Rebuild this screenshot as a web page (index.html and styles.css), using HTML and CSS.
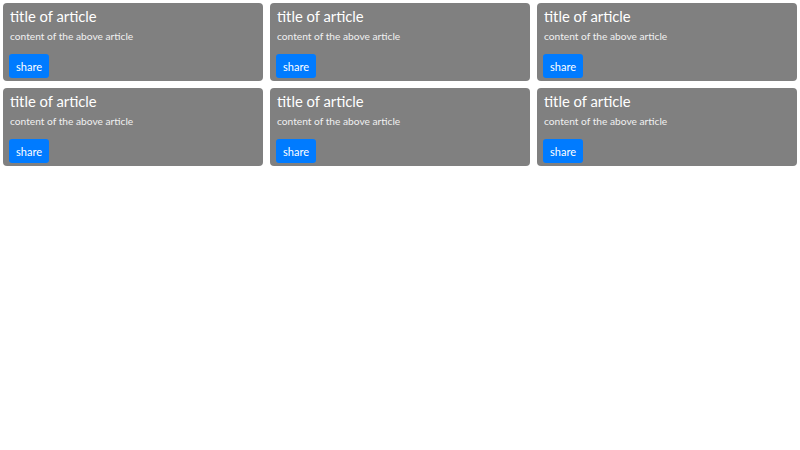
FILE: index.html
```html
<!DOCTYPE html>
<html>
<head>
<meta charset="utf-8">
<link rel="stylesheet" href="styles.css">
</head>
<body>
<div class="grid">
  <div class="card"><h2 class="title">title of article</h2><p class="text">content of the above article</p><button class="btn">share</button></div>
  <div class="card"><h2 class="title">title of article</h2><p class="text">content of the above article</p><button class="btn">share</button></div>
  <div class="card"><h2 class="title">title of article</h2><p class="text">content of the above article</p><button class="btn">share</button></div>
  <div class="card"><h2 class="title">title of article</h2><p class="text">content of the above article</p><button class="btn">share</button></div>
  <div class="card"><h2 class="title">title of article</h2><p class="text">content of the above article</p><button class="btn">share</button></div>
  <div class="card"><h2 class="title">title of article</h2><p class="text">content of the above article</p><button class="btn">share</button></div>
</div>
</body>
</html>
```
FILE: styles.css
```css
html, body { margin: 0; padding: 0; background: #fff; }
body { font-family: Lato, "Open Sans", sans-serif; }
.grid {
  display: grid;
  grid-template-columns: repeat(3, 1fr);
  gap: 7px;
  padding: 3px;
}
.card {
  background: #808080;
  border-radius: 4px;
  padding: 5px 6px 3px 6px;
  height: 78px;
  box-sizing: border-box;
  display: flex;
  flex-direction: column;
  align-items: flex-start;
}
.title {
  margin: 0;
  font-size: 14.8px;
  font-weight: 400;
  color: #fff;
  line-height: 17px;
  padding-left: 1px;
}
.text {
  margin: 5px 0 0 0;
  font-size: 10.2px;
  line-height: 12px;
  color: #f0f0f0;
  padding-left: 1px;
}
.btn {
  margin-top: 12px;
  background: #007bff;
  color: #fff;
  border: none;
  border-radius: 3px;
  font-family: inherit;
  font-size: 11px;
  width: 40px;
  height: 24px;
  padding: 0;
}
```
